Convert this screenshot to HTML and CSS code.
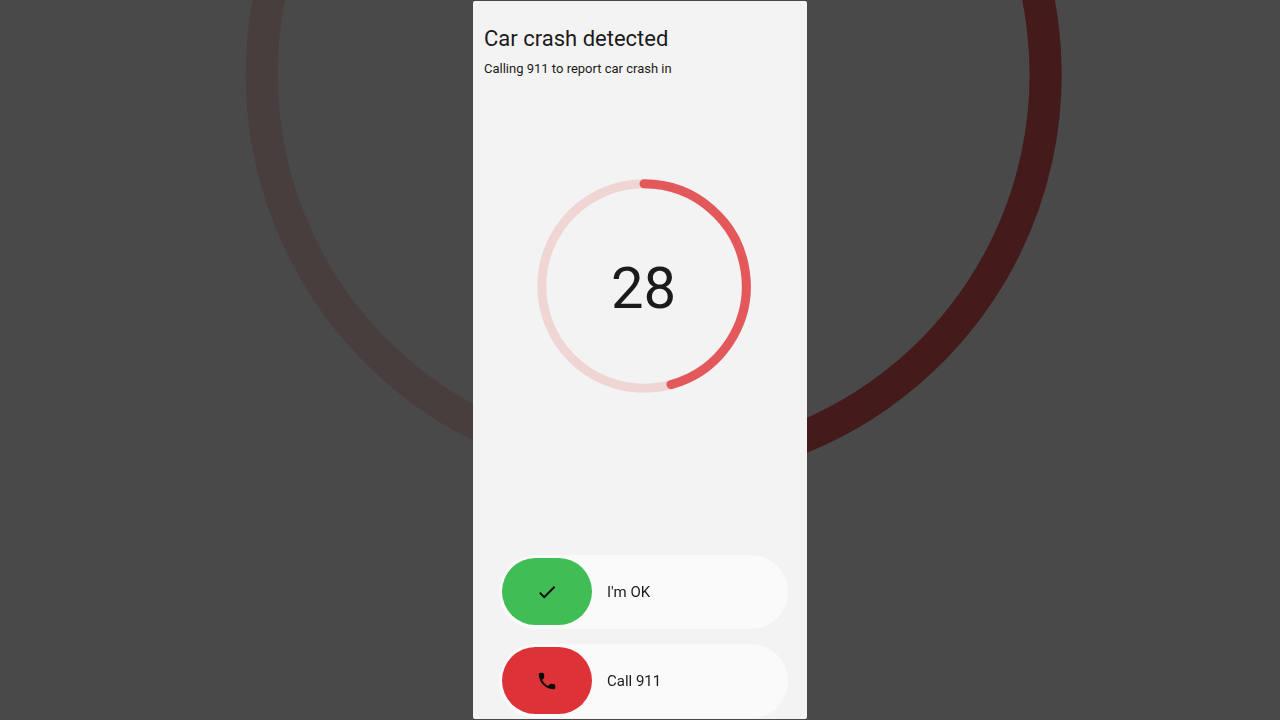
FILE: index.html
```html
<!DOCTYPE html>
<html lang="en">
<head>
<meta charset="utf-8">
<meta name="viewport" content="width=device-width, initial-scale=1">
<title>Car crash detected</title>
<link rel="stylesheet" href="styles.css">
</head>
<body class="stage">
<svg class="backdrop" viewBox="0 0 1280 720" preserveAspectRatio="xMidYMid slice" aria-hidden="true">
  <circle class="backdrop-track" cx="653.7" cy="74.5" r="392"/>
  <path class="backdrop-progress" d="M653.7 -317.5A392 392 0 0 1 757.1 452.6"/>
</svg>
<main class="phone">
  <header class="header">
    <h1 class="title">Car crash detected</h1>
    <p class="subtitle">Calling 911 to report car crash in</p>
  </header>
  <section class="countdown">
    <div class="dial" role="timer">
      <svg class="ring" viewBox="0 0 214 214" aria-hidden="true">
        <circle class="ring-track" cx="107" cy="107" r="102.2"/>
        <path class="ring-progress" d="M107 4.8A102.2 102.2 0 0 1 134 205.6"/>
      </svg>
      <span class="seconds">28</span>
    </div>
  </section>
  <div class="actions">
    <button class="slider" type="button">
      <span class="knob knob-ok">
        <svg class="icon" viewBox="0 0 24 24" aria-hidden="true"><path d="M9 16.17 4.83 12l-1.42 1.41L9 19 21 7l-1.41-1.41z"/></svg>
      </span>
      <span class="label">I'm OK</span>
    </button>
    <button class="slider" type="button">
      <span class="knob knob-call">
        <svg class="icon" viewBox="0 0 24 24" aria-hidden="true"><path d="M19.23 15.26l-2.54-.29c-.61-.07-1.21.14-1.64.57l-1.84 1.84c-2.83-1.44-5.15-3.75-6.59-6.59l1.85-1.85c.43-.43.64-1.03.57-1.64l-.29-2.52c-.12-1.01-.97-1.77-1.99-1.77H5.03c-1.13 0-2.07.94-2 2.07.53 8.54 7.36 15.36 15.89 15.89 1.13.07 2.07-.87 2.07-2v-1.73c.01-1.01-.75-1.86-1.76-1.98z" /></svg>
      </span>
      <span class="label">Call 911</span>
    </button>
  </div>
</main>
</body>
</html>
```
FILE: styles.css
```css
* {
  box-sizing: border-box;
}

.stage {
  margin: 0;
  min-height: 100vh;
  padding: 1px 0;
  display: flex;
  justify-content: center;
  background: #494949;
  font-family: Roboto, "Liberation Sans", sans-serif;
  color: #1b1b1b;
}

.backdrop {
  position: fixed;
  inset: 0;
  width: 100%;
  height: 100%;
  fill: none;
  stroke-width: 32px;
}

.backdrop-track {
  stroke: #493e3e;
}

.backdrop-progress {
  stroke: #441a1b;
  stroke-linecap: round;
}

.phone {
  position: relative;
  width: 100%;
  max-width: 334px;
  display: flex;
  flex-direction: column;
  background: #f3f3f3;
  border-radius: 2px;
}

.header {
  padding: 24px 11px 0;
}

.title {
  margin: 0;
  font-size: 22px;
  line-height: 28px;
  font-weight: 400;
}

.subtitle {
  margin: 6px 0 0;
  font-size: 13px;
  line-height: 20px;
}

.countdown {
  flex: 1;
  display: flex;
  align-items: center;
  justify-content: center;
  padding: 0 19px 62px 26px;
}

.dial {
  display: grid;
  place-items: center;
  width: 100%;
  max-width: 214px;
}

.ring,
.seconds {
  grid-area: 1 / 1;
}

.ring {
  display: block;
  width: 100%;
  fill: none;
  stroke-width: 9px;
}

.ring-track {
  stroke: #f0d5d5;
}

.ring-progress {
  stroke: #e3585b;
  stroke-linecap: round;
}

.seconds {
  font-size: 58px;
  line-height: 64px;
  padding-top: 4px;
}

.actions {
  display: flex;
  flex-direction: column;
  gap: 15px;
  padding: 0 19px 1px 26px;
}

.slider {
  display: flex;
  align-items: center;
  gap: 15px;
  width: 100%;
  padding: 3px 3px 4px;
  border: 0;
  border-radius: 37px;
  background: #fafafa;
  color: inherit;
  font: inherit;
  text-align: left;
  cursor: pointer;
}

.knob {
  display: flex;
  align-items: center;
  justify-content: center;
  width: 90px;
  height: 67px;
  border-radius: 34px;
}

.knob-ok {
  background: #41bd55;
}

.knob-call {
  background: #dd3338;
}

.icon {
  width: 22px;
  height: 22px;
  fill: #080808;
}

.label {
  font-size: 15px;
  line-height: 20px;
}
```
